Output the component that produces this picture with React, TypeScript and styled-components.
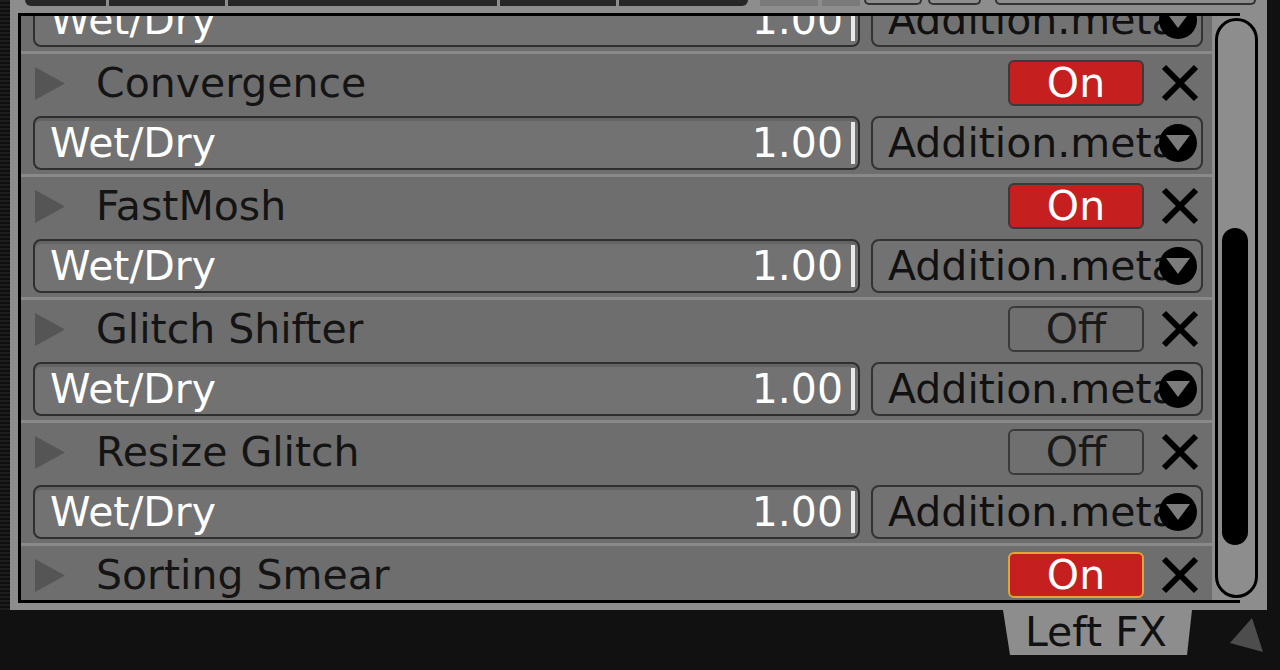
import React from "react";
import styled, { createGlobalStyle } from "styled-components";

const GlobalStyle = createGlobalStyle`
  html, body {
    margin: 0;
    padding: 0;
    background: #111111;
  }
  body {
    font-family: "DejaVu Sans", "Liberation Sans", sans-serif;
  }
`;

type Effect = { name: string; on: boolean; focused?: boolean };

const effects: Effect[] = [
  { name: "Convergence", on: true },
  { name: "FastMosh", on: true },
  { name: "Glitch Shifter", on: false },
  { name: "Resize Glitch", on: false },
  { name: "Sorting Smear", on: true, focused: true },
];

const Screen = styled.div`
  width: 1280px;
  height: 670px;
  overflow: hidden;
  background: #111111;
  display: flex;
  flex-direction: column;
`;

const Main = styled.div`
  display: flex;
  height: 610px;
`;

const Gutter = styled.div`
  width: 10px;
  background: repeating-linear-gradient(0deg, #1d1d1d 0 2px, #0f0f0f 2px 4px);
`;

const Panel = styled.div`
  width: 1257px;
  box-sizing: border-box;
  padding-left: 8px;
  background: #8d8d8d;
  display: flex;
  flex-direction: column;
`;

const TopStrip = styled.div`
  display: flex;
  align-items: flex-start;
  height: 6px;
`;

const TabGroup = styled.div`
  display: flex;
  gap: 3px;
  margin-left: 7px;
  height: 6px;
  border-radius: 0 0 7px 7px;
  overflow: hidden;
`;

const DarkTab = styled.div<{ $w: number }>`
  width: ${(p) => p.$w}px;
  background: #272727;
`;

const FlatTab = styled.div<{ $w: number; $ml: number }>`
  width: ${(p) => p.$w}px;
  margin-left: ${(p) => p.$ml}px;
  height: 6px;
  background: #7a7a7a;
`;

const OutlineTab = styled.div<{ $w: number; $ml: number }>`
  width: ${(p) => p.$w}px;
  margin-left: ${(p) => p.$ml}px;
  height: 5px;
  box-sizing: border-box;
  border: 2px solid #333333;
  border-top: none;
  border-radius: 0 0 7px 7px;
`;

const Frame = styled.div`
  margin-top: 7px;
  width: 1222px;
  height: 590px;
  box-sizing: border-box;
  border: 3px solid #000000;
  border-right: none;
  display: flex;
`;

const List = styled.div`
  width: 1191px;
  height: 100%;
  overflow: hidden;
  background: #6e6e6e;
`;

const ListInner = styled.div`
  margin-top: -27px;
  display: flex;
  flex-direction: column;
`;

const Separator = styled.div`
  height: 3px;
  background: #898989;
`;

const HeaderRow = styled.div`
  height: 58px;
  display: flex;
  align-items: center;
  padding: 0 12px 0 14px;
`;

const Disclosure = styled.svg`
  width: 30px;
  height: 33px;
  margin-right: 31px;
  flex: none;
`;

const Name = styled.div`
  flex: 1;
  font-size: 41px;
  color: #141414;
  white-space: nowrap;
`;

const Toggle = styled.div<{ $on: boolean; $focused?: boolean }>`
  width: 136px;
  height: 46px;
  box-sizing: border-box;
  border: 2px solid ${(p) => (p.$focused ? "#e3a43a" : "#3a3a3a")};
  border-radius: 6px;
  background: ${(p) => (p.$on ? "#c51f1f" : "#6f6f6f")};
  color: ${(p) => (p.$on ? "#ffffff" : "#1a1a1a")};
  font-size: 41px;
  display: flex;
  align-items: center;
  justify-content: center;
  margin-right: 16px;
  flex: none;
`;

const Close = styled.svg`
  width: 40px;
  height: 40px;
  flex: none;
`;

const SliderRow = styled.div<{ $first?: boolean }>`
  height: 62px;
  display: flex;
  align-items: center;
  gap: 11px;
  padding: 0 9px 0 12px;
`;

const Slider = styled.div`
  position: relative;
  width: 827px;
  height: 54px;
  box-sizing: border-box;
  border: 2px solid #2f2f2f;
  border-radius: 8px;
  background: #727272;
  box-shadow: inset 0 3px 0 rgba(0, 0, 0, 0.12);
  display: flex;
  align-items: center;
  justify-content: space-between;
  padding: 0 15px;
  color: #ffffff;
  font-size: 41px;
  white-space: nowrap;
`;

const Knob = styled.div`
  position: absolute;
  right: 3px;
  top: 4px;
  bottom: 4px;
  width: 4px;
  background: #e8e8e8;
`;

const Dropdown = styled.div`
  position: relative;
  width: 332px;
  height: 54px;
  box-sizing: border-box;
  border: 2px solid #333333;
  border-radius: 8px;
  background: #727272;
  overflow: hidden;
  display: flex;
  align-items: center;
  padding-left: 15px;
  color: #111111;
  font-size: 41px;
  white-space: nowrap;
`;

const Arrow = styled.svg`
  position: absolute;
  right: 4px;
  top: 50%;
  transform: translateY(-50%);
  width: 38px;
  height: 38px;
`;

const ScrollTrack = styled.div`
  width: 43px;
  margin: 2px -18px 2px 3px;
  box-sizing: border-box;
  border: 3px solid #000000;
  border-radius: 22px;
  background: #8d8d8d;
  display: flex;
  flex-direction: column;
  padding-left: 4px;
`;

const Thumb = styled.div<{ $top: number; $h: number }>`
  margin-top: ${(p) => p.$top}px;
  height: ${(p) => p.$h}px;
  width: 26px;
  border-radius: 13px;
  background: #000000;
`;

const BottomBar = styled.div`
  display: flex;
  justify-content: flex-end;
  align-items: flex-start;
  padding-right: 13px;
  height: 60px;
`;

const Tab = styled.div`
  width: 189px;
  height: 45px;
  line-height: 45px;
  box-sizing: border-box;
  padding-left: 22px;
  background: #8d8d8d;
  clip-path: polygon(0 0, 100% 0, 184px 100%, 7px 100%);
  font-size: 41px;
  color: #111111;
  white-space: nowrap;
`;

const Grip = styled.svg`
  width: 42px;
  height: 46px;
  margin-left: 33px;
`;

const WetDry = () => (
  <SliderRow>
    <Slider>
      <span>Wet/Dry</span>
      <span>1.00</span>
      <Knob />
    </Slider>
    <Dropdown>
      Addition.meta
      <Arrow viewBox="0 0 38 38">
        <circle cx="19" cy="19" r="19" fill="#000" />
        <polygon points="7,11 31,11 19,27" fill="#7c7c7c" />
      </Arrow>
    </Dropdown>
  </SliderRow>
);

const EffectBlock = ({ fx }: { fx: Effect }) => (
  <>
    <Separator />
    <HeaderRow>
      <Disclosure viewBox="0 0 30 33">
        <polygon points="0,0 30,16.5 0,33" fill="#555555" />
      </Disclosure>
      <Name>{fx.name}</Name>
      <Toggle $on={fx.on} $focused={fx.focused}>
        {fx.on ? "On" : "Off"}
      </Toggle>
      <Close viewBox="0 0 40 40">
        <path d="M4 4 L36 36 M36 4 L4 36" stroke="#000" strokeWidth="6" />
      </Close>
    </HeaderRow>
    <WetDry />
  </>
);

export default function App() {
  return (
    <Screen>
      <GlobalStyle />
      <Main>
        <Gutter />
        <Panel>
          <TopStrip>
            <TabGroup>
              <DarkTab $w={81} />
              <DarkTab $w={116} />
              <DarkTab $w={269} />
              <DarkTab $w={116} />
              <DarkTab $w={129} />
            </TabGroup>
            <FlatTab $w={58} $ml={12} />
            <FlatTab $w={38} $ml={4} />
            <OutlineTab $w={58} $ml={4} />
            <OutlineTab $w={53} $ml={6} />
            <OutlineTab $w={261} $ml={14} />
          </TopStrip>
          <Frame>
            <List>
              <ListInner>
                <WetDry />
                {effects.map((fx) => (
                  <EffectBlock key={fx.name} fx={fx} />
                ))}
              </ListInner>
            </List>
            <ScrollTrack>
              <Thumb $top={207} $h={317} />
            </ScrollTrack>
          </Frame>
        </Panel>
      </Main>
      <BottomBar>
        <Tab>Left FX</Tab>
        <Grip viewBox="0 0 42 46">
          <polygon points="5,33 27,8 38,42" fill="#4d4d4d" />
        </Grip>
      </BottomBar>
    </Screen>
  );
}
